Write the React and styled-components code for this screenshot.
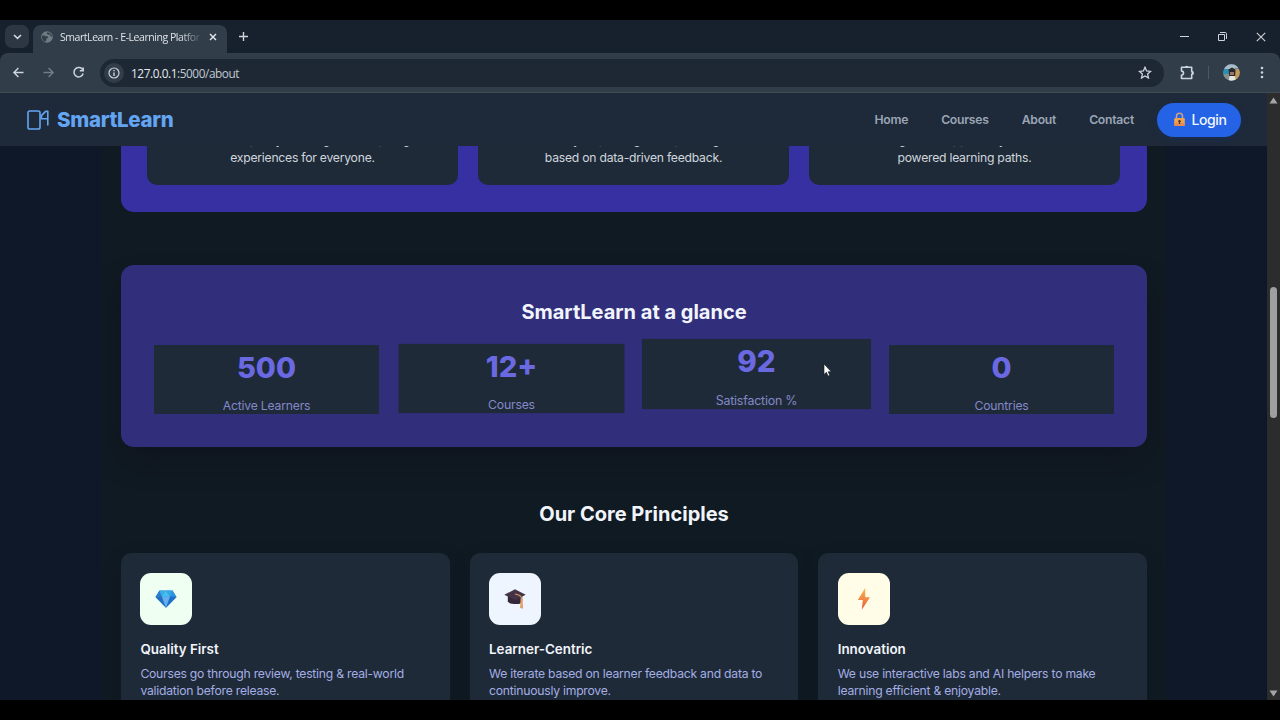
import React from "react";
import styled, { createGlobalStyle } from "styled-components";

const GlobalStyle = createGlobalStyle`
  * {
    box-sizing: border-box;
    margin: 0;
    padding: 0;
  }
  body {
    background-color: #000;
    font-family: Inter, sans-serif;
    overflow: hidden;
  }
  svg {
    display: block;
    flex-shrink: 0;
  }
`;

// screen & browser window
const Screen = styled.div`
  width: 1280px;
  height: 720px;
  padding: 20px 0;
  background-color: #000;
`;
const Window = styled.div`
  position: relative;
  display: flex;
  flex-direction: column;
  height: 680px;
  overflow: hidden;
  background-color: #17212d;
`;
const TabStrip = styled.div`
  display: flex;
  align-items: flex-start;
  height: 33px;
  padding: 5px 0 0 5px;
`;
const TabSearch = styled.div`
  display: flex;
  align-items: center;
  justify-content: center;
  width: 24px;
  height: 23px;
  border-radius: 7px;
  background-color: #2c3743;
`;
const Tab = styled.div`
  display: flex;
  align-items: center;
  width: 194px;
  height: 28px;
  margin-left: 4px;
  padding: 0 10px 4px 8px;
  border-radius: 8px 8px 0 0;
  background-color: #323d4a;
`;
const TabTitle = styled.div`
  flex: 1;
  height: 18px;
  margin-left: 7px;
  margin-right: 9px;
  white-space: nowrap;
  font: 400 10.5px/18px "Open Sans", sans-serif;
  letter-spacing: -0.45px;
  color: #dfe3e8;
  mask-image: linear-gradient(to right, #000 86%, transparent 102%);
`;
const NewTab = styled.div`
  margin: 6px 0 0 11px;
`;
const WindowButtons = styled.div`
  display: flex;
  align-items: center;
  gap: 27.5px;
  margin: 6px 14px 0 auto;
`;
const Toolbar = styled.div`
  display: flex;
  align-items: center;
  height: 40px;
  padding: 0 13px 0 12px;
  border-bottom: 1px solid #424b53;
  border-radius: 8px 8px 0 0;
  background-color: #323d4a;
`;
const NavButtons = styled.div`
  display: flex;
  gap: 17px;
`;
const AddressBar = styled.div`
  display: flex;
  align-items: center;
  width: 1064px;
  height: 28px;
  margin-left: 15px;
  padding: 0 12px 0 4px;
  border-radius: 14px;
  background-color: #1e2835;
`;
const InfoBadge = styled.div`
  display: flex;
  align-items: center;
  justify-content: center;
  width: 20px;
  height: 20px;
  border-radius: 50%;
  background-color: #323d4a;
`;
const Url = styled.div`
  flex: 1;
  margin-left: 7px;
  font: 400 11.8px/18px "Open Sans", sans-serif;
  letter-spacing: -0.42px;
  color: #c3cad1;

  span {
    color: #e4e8ec;
  }
`;
const Divider = styled.div`
  width: 1px;
  height: 13px;
  margin: 0 14px 0 13px;
  background-color: #4c5865;
`;

// page
const Viewport = styled.div`
  display: flex;
  height: 607px;
`;
const Page = styled.div`
  display: flex;
  flex-direction: column;
  width: 1267px;
  background-color: #0f1829;
`;
const SiteNav = styled.nav`
  display: flex;
  align-items: center;
  flex-shrink: 0;
  height: 53px;
  padding: 0 26px;
  background-color: #1e2a39;
`;
const Brand = styled.div`
  display: flex;
  align-items: center;
  gap: 7px;
  font-size: 20.5px;
  font-weight: 800;
  letter-spacing: -0.3px;
  color: #64a5f3;
`;
const Links = styled.div`
  display: flex;
  align-items: center;
  gap: 33px;
  margin-left: auto;
  font-size: 12.2px;
  font-weight: 600;
  letter-spacing: -0.25px;
  color: #9aa5b5;
`;
const LoginButton = styled.button`
  display: flex;
  align-items: center;
  justify-content: center;
  gap: 6px;
  width: 84px;
  height: 34px;
  margin-left: 23px;
  padding-left: 1px;
  border: none;
  border-radius: 17px;
  background-color: #2563e6;
  box-shadow: 0 2px 6px rgba(20, 50, 120, 0.4);
  color: #f2f6ff;
  font: 500 14px Inter, sans-serif;
  letter-spacing: -0.4px;
`;
const Main = styled.main`
  flex: 1;
  width: 1064px;
  margin-left: 102px;
  padding: 0 19px;
  overflow: hidden;
  background-color: #101a22;
`;

const Goals = styled.section`
  display: grid;
  grid-template-columns: repeat(3, 1fr);
  gap: 20px;
  height: 66px;
  padding: 0 27px 27px 26px;
  border-radius: 0 0 13px 13px;
  background-color: #3730a3;
`;
const GoalCard = styled.div`
  display: flex;
  align-items: flex-end;
  justify-content: center;
  padding: 0 20px 18px;
  border-radius: 0 0 10px 10px;
  background-color: #1e2a38;
  overflow: hidden;
  text-align: center;
  white-space: pre;
  font-size: 12.2px;
  line-height: 18px;
  letter-spacing: -0.24px;
  color: #d0d6dd;
`;

const Glance = styled.section`
  height: 182px;
  margin-top: 53px;
  padding: 34px 33px 0;
  border-radius: 13px;
  background-color: #312e7c;
  box-shadow: 0 16px 28px -6px rgba(14, 14, 26, 0.5);
`;
const Heading = styled.h2`
  text-align: center;
  font-size: 20px;
  line-height: 26px;
  font-weight: 700;
  color: #f1f5fb;
`;
const Stats = styled.div`
  display: grid;
  grid-template-columns: repeat(4, 1fr);
  gap: 20px;
  margin-top: 20px;
`;
const Stat = styled.div`
  height: 69px;
  background-color: #1e2a38;
  text-align: center;
  transform: translateY(${({ $lift }) => -$lift}px) scale(${({ $zoom }) => $zoom});
`;
const StatValue = styled.div`
  padding-top: 3px;
  font-size: 29px;
  line-height: 40px;
  font-weight: 800;
  color: #6b69e2;
`;
const StatLabel = styled.div`
  margin-top: 9px;
  font-size: 12.2px;
  line-height: 17px;
  letter-spacing: -0.2px;
  color: #8488c8;
`;

const Principles = styled.section`
  padding-top: 54px;
`;
const PrincipleGrid = styled.div`
  display: grid;
  grid-template-columns: repeat(3, 1fr);
  gap: 20px;
  margin-top: 26px;
`;
const PrincipleCard = styled.article`
  height: 190px;
  padding: 20px 20px 20px 19.4px;
  border-radius: 10px;
  background-color: #1f2a38;
  box-shadow: 0 6px 16px rgba(14, 22, 36, 0.4);
`;
const IconTile = styled.div`
  display: flex;
  align-items: center;
  justify-content: center;
  width: 52px;
  height: 52px;
  border-radius: 11px;
  background-color: ${({ $bg }) => $bg};
`;
const PrincipleTitle = styled.h3`
  margin-top: 15px;
  font-size: 13.4px;
  line-height: 18px;
  font-weight: 600;
  color: #f1f5fb;
`;
const PrincipleText = styled.p`
  margin-top: 7px;
  white-space: pre;
  font-size: 12.2px;
  line-height: 17px;
  letter-spacing: -0.24px;
  color: #a3aee4;
`;

// scrollbar & cursor
const Scrollbar = styled.div`
  display: flex;
  flex-direction: column;
  align-items: center;
  width: 13px;
  padding: 4px 0 3px;
  background-color: #2c2c2c;
`;
const Thumb = styled.div`
  width: 7px;
  height: 131px;
  margin-top: 183px;
  margin-bottom: auto;
  border-radius: 4px;
  background-color: #9f9f9f;
`;
const Cursor = styled.svg`
  position: absolute;
  left: 823px;
  top: 343px;
`;

const stroke = { fill: "none", stroke: "#cdd4db", strokeWidth: 1.4 };

const GlobeIcon = () => (
  <svg width="12" height="12" viewBox="0 0 12 12">
    <circle cx="6" cy="6" r="5.8" fill="#707b84" />
    <path d="M1 5 3 4.2 5 5.4 6.5 5 7.2 6.6 5.6 7.4 5.4 9.2 4 10.8C1.8 10 .8 8 1 5ZM6.5 1.2 5.6 2.6 7.2 3.8 9 3.2 9.4 5 11.4 6C11 3.3 9 1.4 6.5 1.2Z" fill="#343f49" />
  </svg>
);

const LockIcon = () => (
  <svg width="13" height="15" viewBox="0 0 13 15">
    <path d="M3.5 7V4.2a3 3 0 0 1 6 0V7" fill="none" stroke="#c9a188" strokeWidth="1.5" />
    <rect x="1.2" y="6" width="10.6" height="8" rx="1.2" fill="#f2a24e" />
    <path d="M1.2 11h10.6v1.8a1.2 1.2 0 0 1-1.2 1.2H2.4a1.2 1.2 0 0 1-1.2-1.2Z" fill="#e68a4e" />
    <circle cx="6.5" cy="9.2" r="1.2" fill="#49352f" />
    <path d="M6.5 9v3" stroke="#49352f" strokeWidth="1.1" />
  </svg>
);

const GemIcon = () => (
  <svg width="22" height="18" viewBox="0 0 22 18">
    <path d="M4.5 0.5h13L21.5 7 11 17.8.5 7Z" fill="#2f8fdd" />
    <path d="M4.5.5 6.8 6.5.5 7Z" fill="#2a7fcb" />
    <path d="M4.5.5H11L6.8 6.5Z" fill="#3caee8" />
    <path d="M11 .5 15.2 6.5H6.8Z" fill="#42c3ed" />
    <path d="M17.5.5 15.2 6.5 11 .5Z" fill="#35a5e6" />
    <path d="M17.5.5 21.5 7l-6.3-.5Z" fill="#2f93dc" />
    <path d="M.5 7 6.8 6.5 11 17.8Z" fill="#2270bd" />
    <path d="M6.8 6.5h8.4L11 17.8Z" fill="#65aef0" />
    <path d="M21.5 7 15.2 6.5 11 17.8Z" fill="#1e6fc5" />
  </svg>
);

const CapIcon = () => (
  <svg width="22" height="22" viewBox="0 0 22 22">
    <path d="M3.8 8v5.2c1.2 2.2 3 2.8 6 2.8h5.4l3-2.2V8Z" fill="#35283a" />
    <path d="M.3 6.8 11 1.3l10.7 5.5L11.8 12Z" fill="#443347" />
    <path d="M11 6.2c4.5.5 6.6 1.8 6.7 5" fill="none" stroke="#c58b5c" strokeWidth="1.3" />
    <path d="M16.6 10.5h1.9l.6 10.3-3-.8Z" fill="#e5a06a" />
  </svg>
);

const BoltIcon = () => (
  <svg width="14" height="24" viewBox="0 0 14 24">
    <defs>
      <linearGradient id="bolt" x1="0" y1="0" x2="0" y2="1">
        <stop offset="0" stopColor="#f7b650" />
        <stop offset="0.5" stopColor="#f28a45" />
        <stop offset="1" stopColor="#e6573f" />
      </linearGradient>
    </defs>
    <path d="M8.2 1 .8 13h5L4.8 22.8 13 10.2H8.3Z" fill="url(#bolt)" />
  </svg>
);

const goals = [
  "To make quality learning, with inspiring\nexperiences for everyone.",
  "Study, improving and upskilling\nbased on data-driven feedback.",
  "Through real support, joyful and AI-\npowered learning paths.",
];

const stats = [
  { value: "500", label: "Active Learners", lift: 0, zoom: 1 },
  { value: "12+", label: "Courses", lift: 1, zoom: 1.004 },
  { value: "92", label: "Satisfaction %", lift: 5.5, zoom: 1.018 },
  { value: "0", label: "Countries", lift: 0, zoom: 1 },
];

const principles = [
  {
    icon: <GemIcon />,
    bg: "#effff2",
    title: "Quality First",
    text: "Courses go through review, testing & real-world\nvalidation before release.",
  },
  {
    icon: <CapIcon />,
    bg: "#eff5ff",
    title: "Learner-Centric",
    text: "We iterate based on learner feedback and data to\ncontinuously improve.",
  },
  {
    icon: <BoltIcon />,
    bg: "#fffde8",
    title: "Innovation",
    text: "We use interactive labs and AI helpers to make\nlearning efficient & enjoyable.",
  },
];

const BrowserTabs = () => (
  <TabStrip>
    <TabSearch>
      <svg width="9" height="6" viewBox="0 0 9 6">
        <path d="M1 1l3.5 3.3L8 1" {...stroke} strokeWidth="1.7" />
      </svg>
    </TabSearch>
    <Tab>
      <GlobeIcon />
      <TabTitle>SmartLearn - E-Learning Platfor</TabTitle>
      <svg width="8" height="8" viewBox="0 0 8 8">
        <path d="M1 1l6 6M7 1 1 7" {...stroke} stroke="#e6eaee" />
      </svg>
    </Tab>
    <NewTab>
      <svg width="11" height="11" viewBox="0 0 11 11">
        <path d="M5.5 1v9M1 5.5h9" {...stroke} />
      </svg>
    </NewTab>
    <WindowButtons>
      <svg width="10" height="10" viewBox="0 0 10 10">
        <path d="M0 4.5h9" {...stroke} strokeWidth="1" />
      </svg>
      <svg width="11" height="11" viewBox="0 0 11 11">
        <path d="M.5 3.5h6v6h-6ZM2 1.5h5.2c.8 0 1.3.5 1.3 1.3V8" {...stroke} strokeWidth="1" />
      </svg>
      <svg width="10" height="10" viewBox="0 0 10 10">
        <path d="M.8.8l8.4 8.4M9.2.8.8 9.2" {...stroke} strokeWidth="1.1" />
      </svg>
    </WindowButtons>
  </TabStrip>
);

const BrowserToolbar = () => (
  <Toolbar>
    <NavButtons>
      <svg width="13" height="13" viewBox="0 0 13 13">
        <path d="M11.5 6.5H2M6.4 2 1.9 6.5 6.4 11" {...stroke} />
      </svg>
      <svg width="13" height="13" viewBox="0 0 13 13">
        <path d="M1.5 6.5H11M6.6 2l4.5 4.5L6.6 11" {...stroke} stroke="#727e8a" />
      </svg>
      <svg width="13" height="13" viewBox="0 0 13 13">
        <path d="M11 4.3A4.7 4.7 0 1 0 11.2 7.5" {...stroke} strokeWidth="1.5" />
        <path d="M11.2 1.4v3.4H7.8" {...stroke} strokeWidth="1.5" />
      </svg>
    </NavButtons>
    <AddressBar>
      <InfoBadge>
        <svg width="12" height="12" viewBox="0 0 12 12">
          <circle cx="6" cy="6" r="5" {...stroke} strokeWidth="1.2" />
          <path d="M6 5.4V9M6 3v1.3" {...stroke} />
        </svg>
      </InfoBadge>
      <Url>
        <span>127.0.0.1</span>:5000/about
      </Url>
      <svg width="14" height="13" viewBox="0 0 14 13">
        <path d="M7 1.3 8.6 5l4 .4-3 2.7.9 3.9L7 9.9 3.5 12l.9-3.9-3-2.7 4-.4Z" {...stroke} strokeWidth="1.3" />
      </svg>
    </AddressBar>
    <svg width="15" height="15" viewBox="0 0 15 15" style={{ marginLeft: 16 }}>
      <path d="M1.5 2.3h10.2v4.3a1.4 1.4 0 0 1 0 2.8v4.1H1.5v-3.4a2 2 0 0 0 0-4Z" {...stroke} strokeWidth="1.6" strokeLinejoin="round" />
      <path d="M4.8 2.3a1.9 1.6 0 0 1 3.8 0ZM11.7 6.2a1.8 1.8 0 0 1 0 3.6Z" fill="#cdd4db" />
    </svg>
    <Divider />
    <svg width="17" height="17" viewBox="0 0 17 17">
      <clipPath id="avatar">
        <circle cx="8.5" cy="8.5" r="8.3" />
      </clipPath>
      <g clipPath="url(#avatar)">
        <path d="M0 0h17v17H0Z" fill="#628aa0" />
        <path d="M0 5h8v5H0Z" fill="#2990b4" />
        <path d="M0 0h17v3.5L7 5H0Z" fill="#a8bdc8" />
        <path d="M11 5h6v12h-6Z" fill="#c39a59" />
        <path d="M0 10h7v7H0Z" fill="#81908c" />
        <path d="M5.5 5.5 9 3.5l3.5 2.2-.4 6.3H6.3Z" fill="#29282c" />
        <path d="M7 8h4v3H7Z" fill="#987766" />
        <path d="M5.5 17 6.5 12h5l2 5Z" fill="#e4e6df" />
      </g>
    </svg>
    <svg width="4" height="13" viewBox="0 0 4 13" style={{ marginLeft: "auto", marginRight: 3 }}>
      <g fill="#cdd4db">
        <circle cx="2" cy="2" r="1.3" />
        <circle cx="2" cy="6.5" r="1.3" />
        <circle cx="2" cy="11" r="1.3" />
      </g>
    </svg>
  </Toolbar>
);

const Navbar = () => (
  <SiteNav>
    <Brand>
      <svg width="24" height="22" viewBox="0 0 24 22" fill="none" stroke="#64a5f3" strokeWidth="1.6" strokeLinejoin="round">
        <rect x="2" y="2" width="12" height="18" rx="1.8" />
        <path d="M21.8 16.5V2.2L19.6 2.4 15.4 6.6v3.2h6" />
      </svg>
      SmartLearn
    </Brand>
    <Links>
      <span>Home</span>
      <span>Courses</span>
      <span>About</span>
      <span>Contact</span>
    </Links>
    <LoginButton>
      <LockIcon />
      Login
    </LoginButton>
  </SiteNav>
);

const App = () => {
  return (
    <>
      <GlobalStyle />
      <Screen>
        <Window>
          <BrowserTabs />
          <BrowserToolbar />
          <Viewport>
            <Page>
              <Navbar />
              <Main>
                {/* end of the goals section, scrolled under the navbar */}
                <Goals>
                  {goals.map((text) => (
                    <GoalCard key={text}>{text}</GoalCard>
                  ))}
                </Goals>

                <Glance>
                  <Heading>SmartLearn at a glance</Heading>
                  <Stats>
                    {stats.map((s) => (
                      <Stat key={s.label} $lift={s.lift} $zoom={s.zoom}>
                        <StatValue>{s.value}</StatValue>
                        <StatLabel>{s.label}</StatLabel>
                      </Stat>
                    ))}
                  </Stats>
                </Glance>

                <Principles>
                  <Heading>Our Core Principles</Heading>
                  <PrincipleGrid>
                    {principles.map((p) => (
                      <PrincipleCard key={p.title}>
                        <IconTile $bg={p.bg}>{p.icon}</IconTile>
                        <PrincipleTitle>{p.title}</PrincipleTitle>
                        <PrincipleText>{p.text}</PrincipleText>
                      </PrincipleCard>
                    ))}
                  </PrincipleGrid>
                </Principles>
              </Main>
            </Page>
            <Scrollbar>
              <svg width="9" height="7" viewBox="0 0 9 7">
                <path d="M4.5.5 8.5 6.5h-8Z" fill="#a5a5a5" />
              </svg>
              <Thumb />
              <svg width="9" height="7" viewBox="0 0 9 7">
                <path d="M4.5 6.5 8.5.5h-8Z" fill="#a5a5a5" />
              </svg>
            </Scrollbar>
          </Viewport>
          <Cursor width="9" height="14" viewBox="0 0 9 14">
            <path d="M1 1v10.5l2.4-2.2 1.7 3.8 1.7-.8-1.7-3.6H8.3Z" fill="#fff" stroke="#101820" strokeWidth="0.6" />
          </Cursor>
        </Window>
      </Screen>
    </>
  );
};

export default App;
